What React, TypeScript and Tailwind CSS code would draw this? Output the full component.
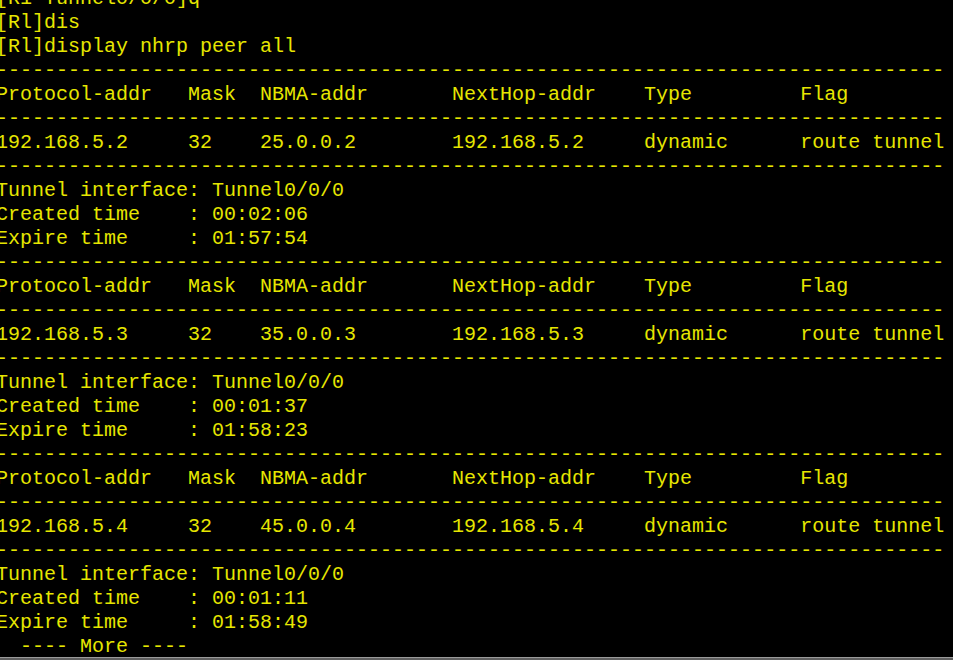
const dash = "-".repeat(79);

const peers = [
  { ip: "192.168.5.2", nbma: "25.0.0.2", created: "00:02:06", expire: "01:57:54" },
  { ip: "192.168.5.3", nbma: "35.0.0.3", created: "00:01:37", expire: "01:58:23" },
  { ip: "192.168.5.4", nbma: "45.0.0.4", created: "00:01:11", expire: "01:58:49" },
];

const lines: string[] = ["[R1-Tunnel0/0/0]q", "[Rl]dis", "[Rl]display nhrp peer all"];
peers.forEach((p) => {
  lines.push(dash);
  lines.push("Protocol-addr   Mask  NBMA-addr       NextHop-addr    Type         Flag");
  lines.push(dash);
  lines.push(`${p.ip}     32    ${p.nbma}        ${p.ip}     dynamic      route tunnel`);
  lines.push(dash);
  lines.push("Tunnel interface: Tunnel0/0/0");
  lines.push(`Created time    : ${p.created}`);
  lines.push(`Expire time     : ${p.expire}`);
});
lines.push("  ---- More ----");

export default function App() {
  return (
    <div className="flex flex-col w-[953px] h-[660px] bg-black overflow-hidden">
      <div className="flex-1 overflow-hidden">
        <div className="-mt-[13px] -ml-[4px] font-['Liberation_Mono','Courier_New',monospace] text-[20px] leading-[24px] text-[#e6e600]">
          {lines.map((l, i) => (
            <div key={i} className="h-[24px] whitespace-pre">{l}</div>
          ))}
        </div>
      </div>
      <div className="h-[3px] bg-[#5f5f5f] border-t border-[#9a9a9a]"></div>
    </div>
  );
}
